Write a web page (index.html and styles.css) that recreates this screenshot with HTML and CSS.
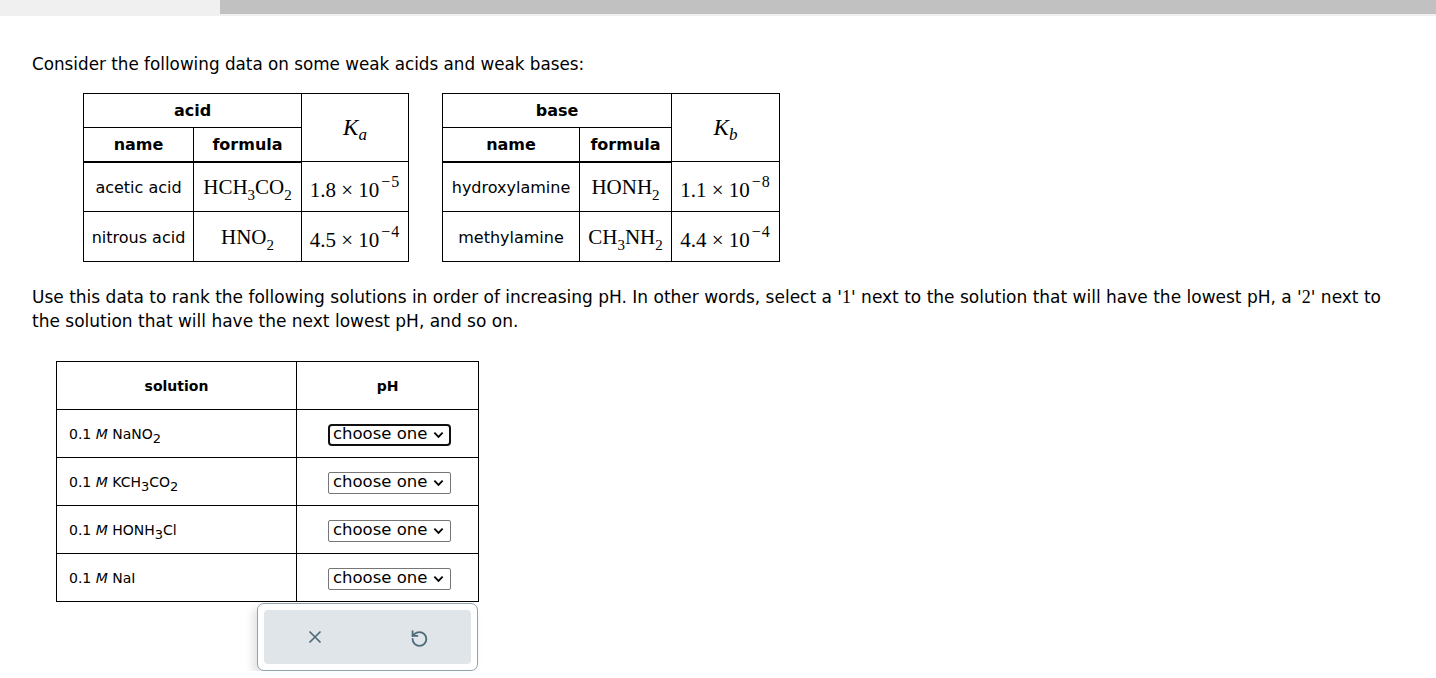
FILE: index.html
```html
<!DOCTYPE html>
<html>
<head>
<meta charset="utf-8">
<link rel="stylesheet" href="styles.css">
</head>
<body>
<div class="topbar"><div class="topbar-fill"></div></div>
<div class="content">
  <p class="intro">Consider the following data on some weak acids and weak bases:</p>
  <div class="data-tables">
    <table class="data acid">
      <colgroup><col class="c1"><col class="c2"><col class="c3"></colgroup>
      <tr class="h1"><th colspan="2">acid</th><td rowspan="2" class="kcell"><span class="m"><i>K</i><sub><i>a</i></sub></span></td></tr>
      <tr class="h2"><th>name</th><th>formula</th></tr>
      <tr class="r"><td>acetic acid</td><td class="m">HCH<sub>3</sub>CO<sub>2</sub></td><td class="m val">1.8 × 10<sup>−5</sup></td></tr>
      <tr class="r"><td>nitrous acid</td><td class="m">HNO<sub>2</sub></td><td class="m val">4.5 × 10<sup>−4</sup></td></tr>
    </table>
    <table class="data base">
      <colgroup><col class="b1"><col class="b2"><col class="b3"></colgroup>
      <tr class="h1"><th colspan="2">base</th><td rowspan="2" class="kcell"><span class="m"><i>K</i><sub><i>b</i></sub></span></td></tr>
      <tr class="h2"><th>name</th><th>formula</th></tr>
      <tr class="r"><td>hydroxylamine</td><td class="m">HONH<sub>2</sub></td><td class="m val">1.1 × 10<sup>−8</sup></td></tr>
      <tr class="r"><td>methylamine</td><td class="m">CH<sub>3</sub>NH<sub>2</sub></td><td class="m val">4.4 × 10<sup>−4</sup></td></tr>
    </table>
  </div>
  <p class="instr">Use this data to rank the following solutions in order of increasing pH. In other words, select a '<span class="serif">1</span>' next to the solution that will have the lowest pH, a '<span class="serif">2</span>' next to the solution that will have the next lowest pH, and so on.</p>
  <table class="sol">
    <tr class="sh"><th class="sc1">solution</th><th class="sc2">pH</th></tr>
    <tr><td class="name">0.1 <i>M</i> NaNO<sub>2</sub></td><td class="pick"><span class="sel focus">choose one<svg viewBox="0 0 12 8" class="chev"><path d="M1.5 1.5l4.5 4.5 4.5-4.5" fill="none" stroke="#000" stroke-width="2"/></svg></span></td></tr>
    <tr><td class="name">0.1 <i>M</i> KCH<sub>3</sub>CO<sub>2</sub></td><td class="pick"><span class="sel">choose one<svg viewBox="0 0 12 8" class="chev"><path d="M1.5 1.5l4.5 4.5 4.5-4.5" fill="none" stroke="#000" stroke-width="2"/></svg></span></td></tr>
    <tr><td class="name">0.1 <i>M</i> HONH<sub>3</sub>Cl</td><td class="pick"><span class="sel">choose one<svg viewBox="0 0 12 8" class="chev"><path d="M1.5 1.5l4.5 4.5 4.5-4.5" fill="none" stroke="#000" stroke-width="2"/></svg></span></td></tr>
    <tr><td class="name">0.1 <i>M</i> NaI</td><td class="pick"><span class="sel">choose one<svg viewBox="0 0 12 8" class="chev"><path d="M1.5 1.5l4.5 4.5 4.5-4.5" fill="none" stroke="#000" stroke-width="2"/></svg></span></td></tr>
  </table>
  <div class="actions">
    <div class="actions-inner">
      <svg class="ic" viewBox="0 0 20 20"><path d="M4.5 4.5l11 11M15.5 4.5l-11 11" stroke="#4d6b78" stroke-width="1.7" fill="none"/></svg>
      <svg class="ic undo" viewBox="0 0 24 24"><path d="M5 13a7.5 7.5 0 1 0 7.5-7.5 8 8 0 0 0-5.6 2.3L5 9.7" stroke="#4d6b78" stroke-width="2" fill="none" stroke-linecap="round" stroke-linejoin="round"/><path d="M5 4.5v5.2h5.2" stroke="#4d6b78" stroke-width="2" fill="none" stroke-linecap="round" stroke-linejoin="round"/></svg>
    </div>
  </div>
</div>
</body>
</html>
```
FILE: styles.css
```css
html, body { margin: 0; padding: 0; background: #fff; }
body { font-family: "DejaVu Sans", Verdana, sans-serif; color: #000; font-size: 16px; }
.topbar { height: 16px; background: #f0f0f0; padding-left: 220px; }
.topbar-fill { height: 14px; background: #c1c1c1; }
.content { padding-left: 32px; }
.intro { margin: 0; padding-top: 36px; line-height: 24px; font-size: 16.8px; }
.data-tables { display: flex; gap: 33px; margin-left: 51px; margin-top: 17px; align-items: flex-start; }
table.data { border-collapse: collapse; table-layout: fixed; }
table.data td, table.data th { border: 1px solid #000; padding: 0; text-align: center; vertical-align: middle; }
table.data th { font-weight: bold; font-size: 16px; }
.acid .c1 { width: 110px; } .acid .c2 { width: 108px; } .acid .c3 { width: 107px; }
.base .b1 { width: 137px; } .base .b2 { width: 92px; } .base .b3 { width: 108px; }
.data .h1 { height: 34px; } .data .h2 { height: 34px; }
.data .h2 th { border-bottom: 2px solid #000; }
.data .r { height: 50px; }
.data .r td { font-size: 16px; padding-top: 2px; }
.m { font-family: "Liberation Serif", "Times New Roman", serif; font-size: 21px; }
.data .r td.m { font-size: 21px; }
.m sub { font-size: 15px; vertical-align: -6px; line-height: 0; }
.m sup { font-size: 16px; vertical-align: 10px; line-height: 0; margin-left: 2px; letter-spacing: 1px; }
.data .r td.val { padding-top: 8px; }
.kcell .m { font-size: 23px; }
.kcell sub { font-size: 17px; vertical-align: -5px; }
.instr { margin: 23px 0 0; line-height: 24px; width: 1365px; font-size: 17px; }
.serif { font-family: "Liberation Serif", serif; font-size: 18px; }
table.sol { border-collapse: collapse; table-layout: fixed; margin-left: 24px; margin-top: 28px; width: 423px; }
table.sol td, table.sol th { border: 1px solid #000; padding: 0; height: 47px; }
.sol .sc1 { width: 239px; } .sol .sc2 { width: 181px; }
.sol th { font-size: 14px; font-weight: bold; padding-top: 2px; height: 45px; }
.sol td.name { font-size: 14px; padding-left: 12px; vertical-align: top; padding-top: 16px; height: 31px; }
.sol td.name sub { font-size: 13px; vertical-align: -4px; line-height: 0; }
.sol td.pick { text-align: left; padding-left: 31px; padding-top: 2px; height: 45px; }
.sel { display: inline-flex; align-items: center; box-sizing: border-box; width: 123px; height: 22px; border: 1px solid #767676; border-radius: 2px; font-size: 16.5px; padding-left: 4px; gap: 6px; line-height: 1; }
.sel.focus { border: 2px solid #101010; border-radius: 4px; padding-left: 3px; }
.chev { width: 11px; height: 8px; }
.actions { margin-left: 225px; margin-top: 1px; width: 221px; height: 68px; box-sizing: border-box; border: 1px solid #90a4ae; border-radius: 7px; background: #fff; padding: 6px; box-shadow: -4px 4px 8px rgba(0,0,0,0.12); }
.actions-inner { height: 54px; background: #dfe5e8; border-radius: 4px; display: flex; align-items: center; justify-content: space-around; }
.ic { width: 20px; height: 20px; }
.ic.undo { width: 22px; height: 22px; margin-top: 2px; }
```
